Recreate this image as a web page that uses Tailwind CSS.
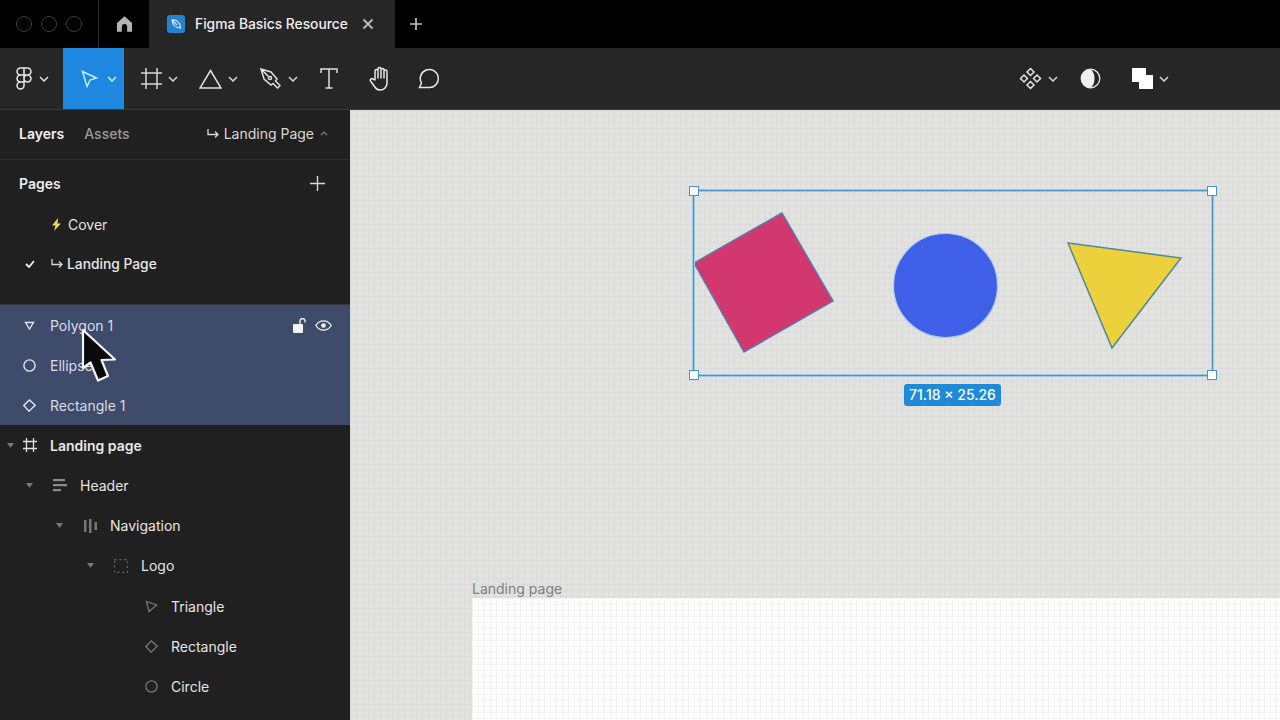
<!DOCTYPE html>
<html><head><meta charset="utf-8">
<script src="https://cdn.jsdelivr.net/npm/@tailwindcss/browser@4"></script>
</head>
<body class="m-0 w-[1280px] h-[720px] overflow-hidden bg-[#202020] font-['Inter','Liberation_Sans',sans-serif] text-[14px] text-[#e8e8e8]">
<div class="flex flex-col w-[1280px] h-[720px]">

<!-- title bar -->
<div class="flex h-12 shrink-0 bg-black items-stretch">
  <div class="flex items-center gap-[9px] w-[99px] pl-4 border-r border-[#2c2c2c]">
    <span class="w-4 h-4 rounded-full border border-[#3c3c3c]"></span>
    <span class="w-4 h-4 rounded-full border border-[#3c3c3c]"></span>
    <span class="w-4 h-4 rounded-full border border-[#3c3c3c]"></span>
  </div>
  <div class="flex items-center justify-center w-[50px]">
    <svg width="17" height="18" viewBox="0 0 18 18"><path d="M9 .8 17 8v9.2h-5.200v-5.400a2.800 2.800 0 0 0-5.600 0v5.400H1V8z" fill="#b4b4b4"/></svg>
  </div>
  <div class="flex items-center w-[246px] bg-[#262626] pl-[18px]">
    <span class="flex items-center justify-center w-[18px] h-[18px] rounded-[3px] bg-[#2383d0]">
      <svg width="12" height="12" viewBox="0 0 12 12" fill="none" stroke="#d8f0ff" stroke-width="1.200"><path d="M2 2c4-1 8 2 8.500 8C6 10 2.500 7 2 2zM2 2l5 5"/></svg>
    </span>
    <span class="ml-[10px] text-[13.800px] font-medium text-[#f0f0f0] whitespace-nowrap">Figma Basics Resource</span>
    <svg class="ml-[14px]" width="12" height="12" viewBox="0 0 12 12" stroke="#b8b8b8" stroke-width="2"><path d="M1.500 1.500l9 9M10.500 1.500l-9 9"/></svg>
  </div>
  <div class="flex items-center pl-[15px]">
    <svg width="12" height="12" viewBox="0 0 13 13" stroke="#c0c0c0" stroke-width="1.800"><path d="M6.500 0v13M0 6.500h13"/></svg>
  </div>
</div>

<!-- toolbar -->
<div class="flex h-[62px] shrink-0 items-stretch bg-[#262626] border-b border-[#3a3a3a]">
  <div class="flex items-center w-[63px] pl-4 gap-[7px]">
    <svg width="16" height="24" viewBox="0 0 16 24" fill="none" stroke="#e8e8e8" stroke-width="1.500"><path d="M8 1H4.500a3.500 3.500 0 0 0 0 7H8zM8 1h3.500a3.500 3.500 0 0 1 0 7H8zM8 8H4.500a3.500 3.500 0 0 0 0 7H8zM8 11.500a3.500 3.500 0 1 0 7 0 3.500 3.500 0 1 0-7 0zM8 15H4.500A3.500 3.500 0 1 0 8 18.500z"/></svg>
    <svg width="10" height="6" viewBox="0 0 10 6" fill="none" stroke="#e0e0e0" stroke-width="1.500"><path d="M1 1l4 4 4-4"/></svg>
  </div>
  <div class="flex items-center w-[61px] bg-[#1e88e0] pl-[18px] gap-[9px]">
    <svg width="17" height="18" viewBox="0 0 17 18" fill="none" stroke="#c5ecfb" stroke-width="1.500"><path d="M1.500 1.500 15.500 8l-6.500 2-3 6.500z"/></svg>
    <svg width="10" height="6" viewBox="0 0 10 6" fill="none" stroke="#d4effb" stroke-width="1.500"><path d="M1 1l4 4 4-4"/></svg>
  </div>
  <div class="flex items-center ml-[17px] gap-[6px]">
    <svg width="21" height="21" viewBox="0 0 21 21" fill="none" stroke="#d8d8d8" stroke-width="1.500"><path d="M5 0v21M16 0v21M0 5h21M0 16h21"/></svg>
    <svg width="10" height="6" viewBox="0 0 10 6" fill="none" stroke="#d8d8d8" stroke-width="1.500"><path d="M1 1l4 4 4-4"/></svg>
  </div>
  <div class="flex items-center ml-[21px] gap-[6px]">
    <svg width="23" height="20" viewBox="0 0 23 20" fill="none" stroke="#e0e0e0" stroke-width="1.500"><path d="M11.500 1.500 22 19H1z"/></svg>
    <svg width="10" height="6" viewBox="0 0 10 6" fill="none" stroke="#d8d8d8" stroke-width="1.500"><path d="M1 1l4 4 4-4"/></svg>
  </div>
  <div class="flex items-center ml-[22px] gap-[7px]">
    <svg width="21" height="21" viewBox="0 0 21 21" fill="none" stroke="#e0e0e0" stroke-width="1.500"><path d="M1 1l3 10 7 6 2-1.500 4.500 4.500 2.500-2.500-4.500-4.500L17 11l-6-7zM1 1l7.500 7.500"/><circle cx="10" cy="10" r="1.600"/></svg>
    <svg width="10" height="6" viewBox="0 0 10 6" fill="none" stroke="#d8d8d8" stroke-width="1.500"><path d="M1 1l4 4 4-4"/></svg>
  </div>
  <div class="flex items-center ml-[22px]">
    <svg width="18" height="21" viewBox="0 0 18 21" fill="none" stroke="#e0e0e0" stroke-width="1.500"><path d="M1 5V1h16v4M9 1v19M5.500 20h7"/></svg>
  </div>
  <div class="flex items-center ml-[31px]">
    <svg width="23" height="25" viewBox="0 0 23 25" fill="none" stroke="#e8e8e8" stroke-width="1.500" stroke-linejoin="round" stroke-linecap="round"><path d="M6 14V5a1.500 1.500 0 0 1 3 0V3a1.500 1.500 0 0 1 3 0v1a1.500 1.500 0 0 1 3 0v1.500a1.500 1.500 0 0 1 3 0V17c0 4-3 7-6.500 7-3 0-4.500-1-6-3.500L1.500 15c-.8-1.500 1-3 2.500-2z M9 5v7M12 3.500V12M15 5v7"/></svg>
  </div>
  <div class="flex items-center ml-[26px]">
    <svg width="23" height="21" viewBox="0 0 23 21" fill="none" stroke="#e8e8e8" stroke-width="1.500"><path d="M1.500 19.500h10a9 9 0 1 0-8-4.500z"/></svg>
  </div>
  <div class="flex items-center ml-auto">
    <svg width="23" height="23" viewBox="0 0 23 23" fill="none" stroke="#e0e0e0" stroke-width="1.500"><path d="M11.500 1.500l3.500 3.500-3.500 3.500L8 5zM5 8l3.500 3.500L5 15l-3.500-3.500zM18 8l3.500 3.500L18 15l-3.500-3.500zM11.500 14.500l3.500 3.500-3.500 3.500L8 18z"/></svg>
    <svg class="ml-[6px]" width="10" height="6" viewBox="0 0 10 6" fill="none" stroke="#d8d8d8" stroke-width="1.500"><path d="M1 1l4 4 4-4"/></svg>
    <svg class="ml-[22px]" width="21" height="21" viewBox="0 0 21 21"><circle cx="10.500" cy="10.500" r="9.300" fill="none" stroke="#e8e8e8" stroke-width="1.300"/><path d="M10.500 1.200a9.300 9.300 0 0 0 0 18.600c3-2 4-5.500 4-9.300s-1-7.300-4-9.300z" fill="#f0f0f0"/></svg>
    <span class="relative ml-[31px] w-[21px] h-[21px]">
      <span class="absolute left-0 top-0 w-[14px] h-[14px] bg-white"></span>
      <span class="absolute left-[7px] top-[7px] w-[14px] h-[14px] bg-white"></span>
    </span>
    <svg class="ml-[6px] mr-[111px]" width="10" height="6" viewBox="0 0 10 6" fill="none" stroke="#d8d8d8" stroke-width="1.500"><path d="M1 1l4 4 4-4"/></svg>
  </div>
</div>

<div class="flex flex-1 min-h-0">
  <!-- sidebar -->
  <aside class="w-[350px] shrink-0 bg-[#202020] overflow-hidden flex flex-col">
    <div class="flex items-center h-[50px] shrink-0 pl-[19px] pr-[22px] pb-[2px] border-b border-[#2e2e2e]">
      <span class="font-semibold text-[#f2f2f2]">Layers</span>
      <span class="ml-[20px] font-medium text-[#9a9a9a]">Assets</span>
      <svg class="ml-auto" width="12" height="10" viewBox="0 0 12 10" fill="none" stroke="#d8d8d8" stroke-width="1.300"><path d="M1 0v5.500h10M8 2.500l3 3-3 3"/></svg>
      <span class="ml-[5px] text-[14px] text-[#d8d8d8]">Landing Page</span>
      <svg class="ml-[6px]" width="8" height="5" viewBox="0 0 8 5" fill="none" stroke="#808080" stroke-width="1.200"><path d="M1 4l3-3 3 3"/></svg>
    </div>
    <div class="flex items-center h-[44px] shrink-0 pt-[3px] pl-[19px] pr-[25px]">
      <span class="font-semibold text-[#ededed]">Pages</span>
      <svg class="ml-auto" width="15" height="15" viewBox="0 0 15 15" stroke="#d8d8d8" stroke-width="1.400"><path d="M7.500 0v15M0 7.500h15"/></svg>
    </div>
    <div class="flex items-center h-[40px] shrink-0 pl-[51px]">
      <svg width="11" height="13" viewBox="0 0 11 13"><path d="M7 0 1 7.500h3.500L3 13l7-7.500H6.500z" fill="#e8dc5a"/></svg>
      <span class="ml-[6px] text-[#e4e4e4]">Cover</span>
    </div>
    <div class="flex items-center h-[40px] shrink-0 pl-[25px]">
      <svg width="10" height="8" viewBox="0 0 10 8" fill="none" stroke="#f0f0f0" stroke-width="1.800"><path d="M1 4l3 3 5-6"/></svg>
      <svg class="ml-[16px]" width="12" height="10" viewBox="0 0 12 10" fill="none" stroke="#d8d8d8" stroke-width="1.300"><path d="M1 0v5.500h10M8 2.500l3 3-3 3"/></svg>
      <span class="ml-[4px] text-[13.800px] font-medium text-[#e8e8e8]">Landing Page</span>
    </div>
    <div class="h-[20px] shrink-0"></div>
    <div class="bg-[#3f4b6b] border-t border-[#333] shrink-0">
      <div class="flex items-center h-[40px] pl-[23px] pr-[18px]">
        <svg width="13" height="11" viewBox="0 0 13 11" fill="none" stroke="#e0e4ee" stroke-width="1.400"><path d="M2.500 2.500h8L6.500 9z"/></svg>
        <span class="ml-[14px] text-[#d8dce6]">Polygon 1</span>
        <svg class="ml-auto" width="13" height="15" viewBox="0 0 13 15"><rect x="0" y="6" width="10" height="9" rx="1" fill="#f4f4f4"/><path d="M7 6V3a2.500 2.500 0 0 1 5 0v1.500" fill="none" stroke="#f4f4f4" stroke-width="1.300"/></svg>
        <svg class="ml-[9px]" width="17" height="11" viewBox="0 0 17 11"><path d="M.8 5.500C3 2 5.500.8 8.500.8s5.500 1.200 7.700 4.700c-2.200 3.500-4.700 4.700-7.700 4.700S3 9 .8 5.500z" fill="none" stroke="#f0f0f0" stroke-width="1.300"/><circle cx="8.500" cy="5.500" r="2.300" fill="#f0f0f0"/></svg>
      </div>
      <div class="flex items-center h-[40px] pl-[23px]">
        <svg width="13" height="13" viewBox="0 0 13 13" fill="none" stroke="#e0e4ee" stroke-width="1.400"><circle cx="6.500" cy="6.500" r="5.600"/></svg>
        <span class="ml-[14px] text-[#d8dce6]">Ellipse 1</span>
      </div>
      <div class="flex items-center h-[40px] pl-[23px]">
        <svg width="13" height="13" viewBox="0 0 13 13" fill="none" stroke="#e0e4ee" stroke-width="1.400"><path d="M6.500.9 12.200 6.200 6 12.200.8 6.500z"/></svg>
        <span class="ml-[14px] text-[#d8dce6]">Rectangle 1</span>
      </div>
    </div>
    <div class="flex items-center h-[40.250px] shrink-0 pl-[7px]">
      <svg width="7" height="5" viewBox="0 0 7 5"><path d="M0 0h7L3.500 5z" fill="#777"/></svg>
      <svg class="ml-[9px]" width="14" height="14" viewBox="0 0 14 14" stroke="#e0e0e0" stroke-width="1.300"><path d="M3.500 0v14M10.500 0v14M0 3.500h14M0 10.500h14"/></svg>
      <span class="ml-[13px] font-semibold text-[#e8e8e8]">Landing page</span>
    </div>
    <div class="flex items-center h-[40.250px] shrink-0 pl-[26px]">
      <svg width="7" height="5" viewBox="0 0 7 5"><path d="M0 0h7L3.500 5z" fill="#777"/></svg>
      <svg class="ml-[20px]" width="14" height="13" viewBox="0 0 14 13" fill="#8a8a8a"><rect x="0" y="0" width="12" height="2.200"/><rect x="0" y="5" width="14" height="2.200"/><rect x="0" y="10" width="8" height="2.200"/></svg>
      <span class="ml-[13px] text-[#e4e4e4]">Header</span>
    </div>
    <div class="flex items-center h-[40.250px] shrink-0 pl-[56px]">
      <svg width="7" height="5" viewBox="0 0 7 5"><path d="M0 0h7L3.500 5z" fill="#777"/></svg>
      <svg class="ml-[21px]" width="14" height="14" viewBox="0 0 14 14" fill="#777"><rect x="0" y="1" width="2.500" height="12"/><rect x="5" y="0" width="2.500" height="14"/><rect x="10.500" y="3" width="2.500" height="8"/></svg>
      <span class="ml-[12px] text-[#e4e4e4]">Navigation</span>
    </div>
    <div class="flex items-center h-[40.250px] shrink-0 pl-[87px]">
      <svg width="7" height="5" viewBox="0 0 7 5"><path d="M0 0h7L3.500 5z" fill="#777"/></svg>
      <svg class="ml-[20px]" width="14" height="14" viewBox="0 0 14 14" fill="none" stroke="#666" stroke-width="1.200" stroke-dasharray="2 2.800"><rect x=".6" y=".6" width="12.800" height="12.800"/></svg>
      <span class="ml-[13px] text-[#e4e4e4]">Logo</span>
    </div>
    <div class="flex items-center h-[40.250px] shrink-0 pl-[145px]">
      <svg width="13" height="13" viewBox="0 0 13 13" fill="none" stroke="#777" stroke-width="1.300"><path d="M1.500 1.500 11.500 5 4 11.500z"/></svg>
      <span class="ml-[13px] text-[#e4e4e4]">Triangle</span>
    </div>
    <div class="flex items-center h-[40.250px] shrink-0 pl-[145px]">
      <svg width="13" height="13" viewBox="0 0 13 13" fill="none" stroke="#777" stroke-width="1.300"><path d="M6.500.9 12.200 6.200 6 12.200.8 6.500z"/></svg>
      <span class="ml-[13px] text-[#e4e4e4]">Rectangle</span>
    </div>
    <div class="flex items-center h-[40.250px] shrink-0 pl-[145px]">
      <svg width="13" height="13" viewBox="0 0 13 13" fill="none" stroke="#777" stroke-width="1.300"><circle cx="6.500" cy="6.500" r="5.600"/></svg>
      <span class="ml-[13px] text-[#e4e4e4]">Circle</span>
    </div>
  </aside>

  <!-- canvas -->
  <main class="relative flex-1 overflow-hidden bg-[#e2e2e1] bg-[linear-gradient(#dbdbda_1px,transparent_1px),linear-gradient(90deg,#dbdbda_1px,transparent_1px)] bg-[size:6px_6px]">
    <svg class="absolute left-0 top-0" width="930" height="610" viewBox="350 110 930 610">
      <polygon points="782,213 694,263 744,352 833,301" fill="#d2386e" stroke="#5c7aa8" stroke-width="1.500"/>
      <circle cx="945.500" cy="285.500" r="52" fill="#3f5fe8" stroke="#a8cdf0" stroke-width="1.200"/>
      <polygon points="1068,243 1181,258 1112,348" fill="#ecd03c" stroke="#4f8a96" stroke-width="1.500"/>
      <rect x="693.500" y="190.500" width="519" height="185" fill="none" stroke="#c4e2f2" stroke-width="3"/>
      <rect x="693.500" y="190.500" width="519" height="185" fill="none" stroke="#4a93c4" stroke-width="1.600"/>
    </svg>
    <span class="absolute left-[339px] top-[76px] w-[10px] h-[10px] bg-white border border-[#4a93c4]"></span>
    <span class="absolute left-[857px] top-[76px] w-[10px] h-[10px] bg-white border border-[#4a93c4]"></span>
    <span class="absolute left-[339px] top-[260px] w-[10px] h-[10px] bg-white border border-[#4a93c4]"></span>
    <span class="absolute left-[857px] top-[260px] w-[10px] h-[10px] bg-white border border-[#4a93c4]"></span>
    <span class="absolute left-[554px] top-[274px] h-[22px] w-[97px] rounded-[3px] bg-[#1f8ad8] text-white text-[14px] font-medium leading-[22px] text-center whitespace-nowrap">71.18 × 25.26</span>
    <span class="absolute left-[122px] top-[468px] text-[14px] text-[#808080]">Landing page</span>
    <div class="absolute left-[122px] top-[488px] right-0 bottom-0 bg-white bg-[linear-gradient(#f3f3f3_1px,transparent_1px),linear-gradient(90deg,#f3f3f3_1px,transparent_1px)] bg-[size:6px_6px]"></div>
  </main>
</div>
</div>

<!-- pointer over everything -->
<svg class="absolute left-[78px] top-[326px]" width="44" height="60" viewBox="78 326 44 60">
  <path d="M83 330V368L90.500 362.500 98 380.500 108 376 101.500 360 115 359.500z" fill="#0a0a0a" stroke="#f4f4f4" stroke-width="2.200" stroke-linejoin="round"/>
</svg>
</body></html>
